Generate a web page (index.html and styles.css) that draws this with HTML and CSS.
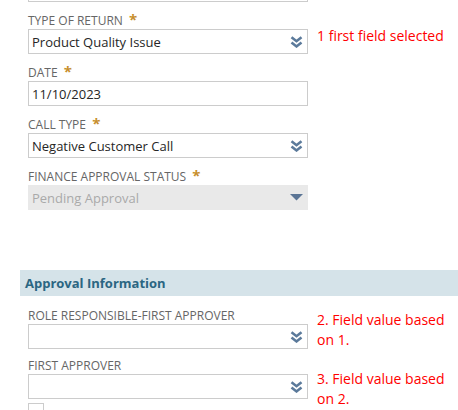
FILE: index.html
```html
<!DOCTYPE html>
<html lang="en">
<head>
  <meta charset="UTF-8">
  <title>Return Form</title>
  <link rel="stylesheet" href="styles.css">
</head>
<body>
  <div class="page">
    <div class="top-edge"></div>

    <div class="row row-first">
      <div class="field">
        <div class="label">Type of Return <span class="req">*</span></div>
        <div class="select">
          <span class="value">Product Quality Issue</span>
          <svg class="chev" width="13" height="12" viewBox="0 0 13 12"><path d="M1.5 1.2 L6.5 5.2 L11.5 1.2 M1.5 6.4 L6.5 10.4 L11.5 6.4" fill="none" stroke="#5b7a9b" stroke-width="2.6"/></svg>
        </div>
      </div>
      <div class="note note-1">1 first field selected</div>
    </div>

    <div class="row">
      <div class="field">
        <div class="label">Date <span class="req">*</span></div>
        <div class="select">
          <span class="value">11/10/2023</span>
        </div>
      </div>
    </div>

    <div class="row">
      <div class="field">
        <div class="label">Call Type <span class="req">*</span></div>
        <div class="select">
          <span class="value">Negative Customer Call</span>
          <svg class="chev" width="13" height="12" viewBox="0 0 13 12"><path d="M1.5 1.2 L6.5 5.2 L11.5 1.2 M1.5 6.4 L6.5 10.4 L11.5 6.4" fill="none" stroke="#5b7a9b" stroke-width="2.6"/></svg>
        </div>
      </div>
    </div>

    <div class="row">
      <div class="field">
        <div class="label">Finance Approval Status <span class="req">*</span></div>
        <div class="select disabled">
          <span class="value">Pending Approval</span>
          <svg class="chev" width="13" height="7" viewBox="0 0 13 7"><polygon points="0,0 13,0 6.5,6.5" fill="#5b7595"/></svg>
        </div>
      </div>
    </div>

    <div class="section-head">Approval Information</div>

    <div class="row row-role">
      <div class="field">
        <div class="label">Role Responsible-First Approver</div>
        <div class="select">
          <span class="value"></span>
          <svg class="chev" width="13" height="12" viewBox="0 0 13 12"><path d="M1.5 1.2 L6.5 5.2 L11.5 1.2 M1.5 6.4 L6.5 10.4 L11.5 6.4" fill="none" stroke="#5b7a9b" stroke-width="2.6"/></svg>
        </div>
      </div>
      <div class="note note-2">2. Field value based<br>on 1.</div>
    </div>

    <div class="row row-approver">
      <div class="field">
        <div class="label">First Approver</div>
        <div class="select">
          <span class="value"></span>
          <svg class="chev" width="13" height="12" viewBox="0 0 13 12"><path d="M1.5 1.2 L6.5 5.2 L11.5 1.2 M1.5 6.4 L6.5 10.4 L11.5 6.4" fill="none" stroke="#5b7a9b" stroke-width="2.6"/></svg>
        </div>
        <div class="checkbox"></div>
      </div>
      <div class="note note-3">3. Field value based<br>on 2.</div>
    </div>
  </div>
</body>
</html>
```

FILE: styles.css
```css
body {
  margin: 0;
  font-family: "Open Sans", sans-serif;
  background: #fff;
  overflow: hidden;
}
.page {
  padding-left: 20px;
}
.top-edge {
  margin-left: 8px;
  width: 278px;
  height: 1px;
  border: 1px solid #cccccc;
  border-top: none;
}
.row {
  display: flex;
  align-items: flex-start;
  padding-left: 8px;
  margin-top: 10px;
}
.row-role {
  margin-top: 11px;
}
.row-approver {
  margin-top: 7px;
}
.field {
  width: 280px;
  flex-shrink: 0;
}
.label {
  font-size: 12px;
  line-height: 17px;
  color: #666666;
  text-transform: uppercase;
  white-space: nowrap;
}
.req {
  color: #c78f2d;
  font-size: 15px;
  font-weight: bold;
  margin-left: 3px;
  vertical-align: top;
  line-height: 15px;
}
.select {
  box-sizing: border-box;
  height: 25px;
  border: 1px solid #cccccc;
  display: flex;
  align-items: center;
  justify-content: space-between;
  padding: 0 4px 0 3px;
}
.value {
  font-size: 13px;
  color: #262626;
}
.select.disabled {
  background: #e9e9e9;
  border-color: #e9e9e9;
}
.select.disabled .value {
  color: #a9a9a9;
}
.chev {
  display: block;
}
.checkbox {
  margin-top: 4px;
  width: 16px;
  height: 16px;
  box-sizing: border-box;
  border: 1px solid #cccccc;
}
.section-head {
  margin-top: 60px;
  height: 26px;
  line-height: 26px;
  background: #d5e3e9;
  color: #2b6682;
  font-size: 13px;
  font-weight: bold;
  padding-left: 5px;
}
.note {
  margin-left: 9px;
  color: #ff0000;
  font-size: 14px;
  line-height: 20px;
  white-space: nowrap;
}
.note-1 {
  margin-top: 14px;
}
.note-2 {
  margin-top: 3px;
}
.note-3 {
  margin-top: 12px;
}
```
